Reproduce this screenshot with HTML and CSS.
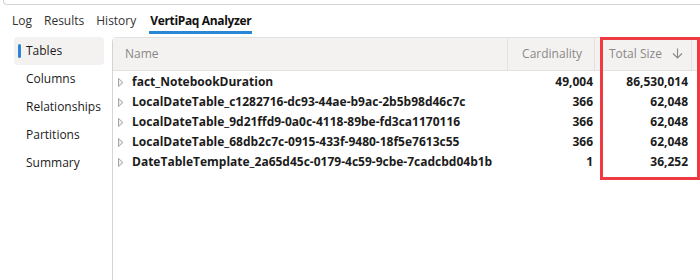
FILE: index.html
```html
<!DOCTYPE html>
<html>
<head>
<meta charset="utf-8">
<link rel="stylesheet" href="styles.css">
</head>
<body>
<div class="topbox"></div>
<nav class="tabs">
  <span class="tab">Log</span>
  <span class="tab">Results</span>
  <span class="tab">History</span>
  <span class="tab active">VertiPaq Analyzer</span>
</nav>
<div class="main">
  <aside class="side">
    <div class="item sel"><span class="bar"></span>Tables</div>
    <div class="item">Columns</div>
    <div class="item">Relationships</div>
    <div class="item">Partitions</div>
    <div class="item">Summary</div>
  </aside>
  <section class="panel">
    <div class="row head">
      <div class="c name">Name</div>
      <div class="c card">Cardinality</div>
      <div class="c size">Total Size <svg class="arrow" width="11" height="11" viewBox="0 0 11 11"><path d="M5.5 0.5 V10 M1 5.5 L5.5 10 L10 5.5" fill="none" stroke="#8a8886" stroke-width="1.1"/></svg></div>
      <div class="c rest"></div>
    </div>
    <div class="row">
      <div class="c name"><svg class="tri" width="6" height="9" viewBox="0 0 6 9"><polygon points="0.5,0.5 5,4.5 0.5,8.5" fill="#ececec" stroke="#a6a6a6" stroke-width="1"/></svg>fact_NotebookDuration</div>
      <div class="c card">49,004</div><div class="c size">86,530,014</div><div class="c rest"></div>
    </div>
    <div class="row">
      <div class="c name"><svg class="tri" width="6" height="9" viewBox="0 0 6 9"><polygon points="0.5,0.5 5,4.5 0.5,8.5" fill="#ececec" stroke="#a6a6a6" stroke-width="1"/></svg>LocalDateTable_c1282716-dc93-44ae-b9ac-2b5b98d46c7c</div>
      <div class="c card">366</div><div class="c size">62,048</div><div class="c rest"></div>
    </div>
    <div class="row">
      <div class="c name"><svg class="tri" width="6" height="9" viewBox="0 0 6 9"><polygon points="0.5,0.5 5,4.5 0.5,8.5" fill="#ececec" stroke="#a6a6a6" stroke-width="1"/></svg>LocalDateTable_9d21ffd9-0a0c-4118-89be-fd3ca1170116</div>
      <div class="c card">366</div><div class="c size">62,048</div><div class="c rest"></div>
    </div>
    <div class="row">
      <div class="c name"><svg class="tri" width="6" height="9" viewBox="0 0 6 9"><polygon points="0.5,0.5 5,4.5 0.5,8.5" fill="#ececec" stroke="#a6a6a6" stroke-width="1"/></svg>LocalDateTable_68db2c7c-0915-433f-9480-18f5e7613c55</div>
      <div class="c card">366</div><div class="c size">62,048</div><div class="c rest"></div>
    </div>
    <div class="row">
      <div class="c name"><svg class="tri" width="6" height="9" viewBox="0 0 6 9"><polygon points="0.5,0.5 5,4.5 0.5,8.5" fill="#ececec" stroke="#a6a6a6" stroke-width="1"/></svg>DateTableTemplate_2a65d45c-0179-4c59-9cbe-7cadcbd04b1b</div>
      <div class="c card">1</div><div class="c size">36,252</div><div class="c rest"></div>
    </div>
    <div class="highlight"></div>
  </section>
</div>
</body>
</html>
```

FILE: styles.css
```css
html, body { margin: 0; padding: 0; background: #fff; }
body {
  font-family: "Open Sans", "Noto Sans", sans-serif;
  font-size: 12px;
  color: #1b1b1b;
  width: 700px;
  height: 280px;
  overflow: hidden;
}
.topbox {
  height: 4px;
  margin-left: 3px;
  border-left: 1px solid #d4d4d4;
  border-bottom: 1px solid #d4d4d4;
  border-bottom-left-radius: 4px;
}
.tabs {
  display: flex;
  gap: 12px;
  padding-left: 12px;
  height: 32px;
  align-items: flex-start;
  padding-top: 7px;
  box-sizing: border-box;
}
.tab {
  color: #323130;
  line-height: 18px;
}
.tab.active {
  font-weight: 700;
  color: #111;
  letter-spacing: -0.35px;
  padding: 0 1px 1px;
  border-bottom: 3px solid #2a86d4;
  margin-left: 1px;
}
.main { display: flex; height: 243px; }
.side {
  width: 98px;
  padding-left: 14px;
}
.item {
  height: 28px;
  line-height: 28px;
  padding-left: 12px;
  color: #1b1b1b;
  border-radius: 4px;
  position: relative;
}
.item.sel {
  background: #f3f2f1;
  margin-right: 8px;
}
.bar {
  position: absolute;
  left: 4px;
  top: 7px;
  width: 3px;
  height: 14px;
  border-radius: 2px;
  background: #2a86d4;
}
.panel {
  flex: 1;
  position: relative;
  border-left: 1px solid #d4d4d4;
  border-top: 1px solid #e1e1e1;
  border-top-left-radius: 5px;
}
.row { display: flex; height: 20px; line-height: 20px; }
.row.head {
  height: 32px;
  line-height: 32px;
  background: #f3f2f1;
  border-bottom: 1px solid #e1e1e1;
  color: #8a8886;
  border-top-left-radius: 5px;
  margin-bottom: 1px;
}
.c { white-space: nowrap; box-sizing: border-box; font-weight: 700; }
.name { width: 394px; padding-left: 12px; }
.card { width: 87px; text-align: right; padding-right: 1px; }
.size { width: 97px; text-align: right; padding-right: 3px; }
.rest { flex: 1; }
.head .c { font-weight: 400; border-left: 1px solid #e1e1e1; }
.head .name { border-left: none; }
.head .card { padding-right: 12px; }
.head .size { text-align: left; padding-left: 14px; }
.arrow { margin-left: 7px; vertical-align: -1px; }
.tri { margin-left: -7px; margin-right: 8px; vertical-align: -1px; }
.highlight {
  position: absolute;
  left: 487px;
  top: -1px;
  width: 94px;
  height: 137px;
  border: 3px solid #ee3b43;
}
```
